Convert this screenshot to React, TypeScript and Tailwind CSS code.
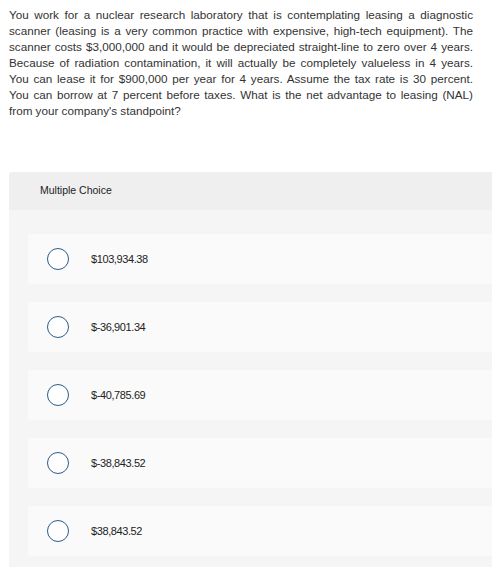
const lines = [
  "You work for a nuclear research laboratory that is contemplating leasing a diagnostic",
  "scanner (leasing is a very common practice with expensive, high-tech equipment). The",
  "scanner costs $3,000,000 and it would be depreciated straight-line to zero over 4 years.",
  "Because of radiation contamination, it will actually be completely valueless in 4 years.",
  "You can lease it for $900,000 per year for 4 years. Assume the tax rate is 30 percent.",
  "You can borrow at 7 percent before taxes. What is the net advantage to leasing (NAL)",
];

const choices = ["$103,934.38", "$-36,901.34", "$-40,785.69", "$-38,843.52", "$38,843.52"];

function RadioCircle() {
  return <span className="w-[22px] h-[22px] rounded-full border-[1.5px] border-[#2b5b8c] bg-white shrink-0" />;
}

export default function App() {
  return (
    <div className="w-[492px] h-[567px] overflow-hidden bg-white text-[#333] font-['Liberation_Sans',Arial,sans-serif]">
      <div className="pl-[9px] pr-[19px] pt-[7px] text-[11.7px] leading-[16px]">
        {lines.map((l) => (
          <p key={l} className="text-justify [text-align-last:justify]">
            {l}
          </p>
        ))}
        <p>from your company's standpoint?</p>
      </div>

      <div className="mt-[53px] ml-[9px] w-[520px] rounded-tl-[3px] bg-[#f5f5f5] pb-[12px]">
        <div className="h-[38px] flex items-center pl-[31px] bg-[#efefef] rounded-tl-[3px] text-[10.5px] text-[#222]">
          Multiple Choice
        </div>
        <div className="flex flex-col gap-[18px] pt-[24px] pl-[19px]">
          {choices.map((c) => (
            <div key={c} className="h-[50px] flex items-center bg-[#fafafa] rounded-[3px] pl-[19px]">
              <RadioCircle />
              <span className="ml-[22px] text-[11px] text-[#222] tracking-[-0.4px]">{c}</span>
            </div>
          ))}
        </div>
      </div>
    </div>
  );
}
